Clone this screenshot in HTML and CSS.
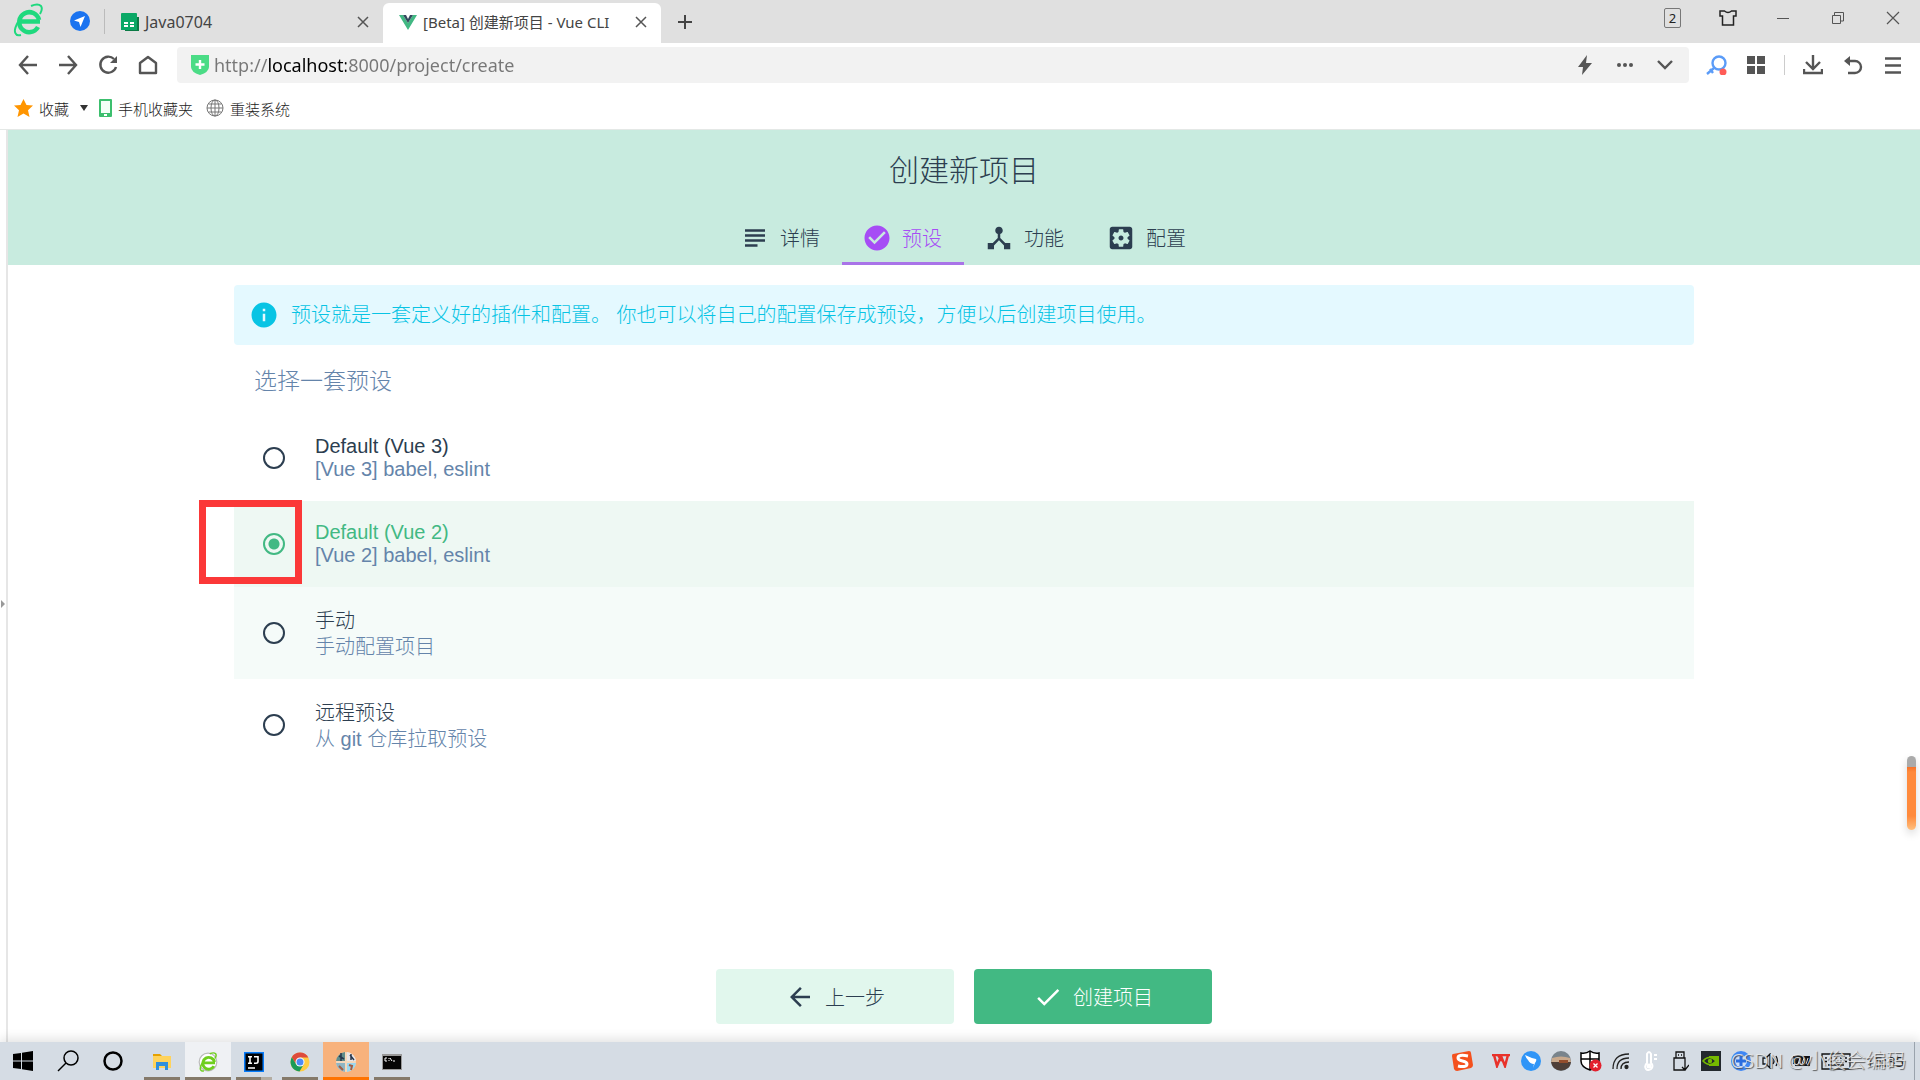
FILE: index.html
```html
<!DOCTYPE html>
<html lang="zh-CN">
<head>
    <meta charset="UTF-8">
    <meta name="viewport" content="width=device-width, initial-scale=1.0">
    <title>[Beta] 创建新项目 - Vue CLI</title>
    <link rel="stylesheet" href="styles.css">
</head>
<body>

<!-- Browser tabs -->
<header class="titlebar">
    <svg class="logo" viewBox="0 0 32 34"><path d="M5.500 18.500H28M26 24A10 10 0 1 1 27 17" fill="none" stroke="#1fd97e" stroke-width="4.500"/><path d="M6 19Q1 28 4 31Q5 33 9 32M19 3Q26 0 29 3Q31 6 28 11" fill="none" stroke="#1fd97e" stroke-width="2"/></svg>
    <svg class="compass" viewBox="0 0 20 20"><circle cx="10" cy="10" r="10" fill="#1a73f0"/><path d="M15 5L4 9.500L9 11L10.500 16Z" fill="#fff"/></svg>
    <span class="tab-divider"></span>
    <div class="tab">
        <svg width="18" height="18" viewBox="0 0 18 18"><path d="M15 4h3v14H4v-2z" fill="#0b7a45"/><path d="M0 1q0-1 1-1h14q1 0 1 1v16H0z" fill="#0aa866"/><path d="M3 9h4v2H3zM9 9h4v2H9zM3 12h4v2H3zM9 12h4v2H9z" fill="#fff"/></svg>
        <span class="tab-title">Java0704</span>
        <button class="tab-close" aria-label="关闭"><svg width="12" height="12" viewBox="0 0 12 12"><path d="M1 1l10 10M11 1L1 11"/></svg></button>
    </div>
    <div class="tab tab-active">
        <svg width="18" height="18" viewBox="0 0 18 18"><path d="M0 2h4l5 8 5-8h4L9 17z" fill="#42b883"/><path d="M4 2h3l2 4 2-4h3L9 10z" fill="#34495e"/></svg>
        <span class="tab-title">[Beta] 创建新项目 - Vue CLI</span>
        <button class="tab-close" aria-label="关闭"><svg width="12" height="12" viewBox="0 0 12 12"><path d="M1 1l10 10M11 1L1 11"/></svg></button>
    </div>
    <button class="tab-new" aria-label="新标签页"><svg width="16" height="16" viewBox="0 0 16 16"><path d="M8 1v14M1 8h14" stroke="#444" stroke-width="2"/></svg></button>
    <div class="window-buttons">
        <button aria-label="标签数"><span class="tab-count">2</span></button>
        <button aria-label="皮肤"><svg width="18" height="18" viewBox="0 0 18 18" fill="none" stroke="#222" stroke-width="1.500"><path d="M1 2h4.500q3.500 3 7 0H17v5h-2.500v9h-11V7H1z"/></svg></button>
        <button aria-label="最小化"><svg width="14" height="14" viewBox="0 0 14 14" stroke="#555"><path d="M1 7.500h12"/></svg></button>
        <button aria-label="还原"><svg width="14" height="14" viewBox="0 0 14 14" fill="none" stroke="#555"><path d="M1.500 4.500h8v8h-8zM3.500 4V1.500h9v8.500H10"/></svg></button>
        <button aria-label="关闭窗口"><svg width="14" height="14" viewBox="0 0 14 14" stroke="#555" stroke-width="1.200"><path d="M1 1l12 12M13 1L1 13"/></svg></button>
    </div>
</header>

<!-- Address bar -->
<div class="toolbar">
    <button aria-label="后退"><svg width="20" height="20" viewBox="0 0 20 20"><path d="M19 10H2M10 1L2 10l8 9"/></svg></button>
    <button aria-label="前进"><svg width="20" height="20" viewBox="0 0 20 20"><path d="M1 10h17M10 1l8 9-8 9"/></svg></button>
    <button aria-label="刷新"><svg width="20" height="20" viewBox="0 0 20 20"><path d="M16 4A8 8 0 1 0 18 12"/><path d="M19 1v7h-7z" fill="#555" stroke="none"/></svg></button>
    <button aria-label="主页"><svg width="20" height="20" viewBox="0 0 20 20"><path d="M2 8l8-6 8 6v10H2z" stroke-linejoin="round"/></svg></button>
    <div class="address">
        <svg width="18" height="20" viewBox="0 0 18 20"><path d="M0 0h18v12q0 5-9 8-9-3-9-8z" fill="#4bdc86" stroke="none"/><path d="M9 5v9M4.500 9.500h9" stroke="#fff"/></svg>
        <input class="url" type="text" value="http://localhost:8000/project/create" aria-label="地址">
        <button aria-label="极速模式"><svg width="16" height="20" viewBox="0 0 16 20"><path d="M10 0L1 12h5l-1 8 10-12H9z" fill="#555" stroke="none"/></svg></button>
        <button aria-label="更多"><svg width="18" height="6" viewBox="0 0 18 6"><g fill="#555" stroke="none"><circle cx="3" cy="3" r="2"/><circle cx="9" cy="3" r="2"/><circle cx="15" cy="3" r="2"/></g></svg></button>
        <button aria-label="展开"><svg width="16" height="10" viewBox="0 0 16 10"><path d="M1 1l7 7 7-7"/></svg></button>
    </div>
    <button aria-label="搜索"><svg width="22" height="20" viewBox="0 0 22 20"><g stroke="#5b9cf8"><circle cx="14" cy="8" r="6.500"/><path d="M9 13l-7 6M5 14l3 4"/></g><circle cx="18" cy="17" r="3.500" fill="#ff5c57" stroke="none"/></svg></button>
    <button aria-label="应用"><svg width="18" height="18" viewBox="0 0 18 18"><path d="M0 0h8v8H0zM10 0h8v8h-8zM0 10h8v8H0zM10 10h8v8h-8z" fill="#555" stroke="none"/></svg></button>
    <span class="tool-divider"></span>
    <button aria-label="下载"><svg width="20" height="20" viewBox="0 0 20 20"><path d="M10 0v13M3 7l7 7 7-7M1 14v4h18v-4"/></svg></button>
    <button aria-label="撤销"><svg width="20" height="20" viewBox="0 0 20 20"><path d="M3 6h9a6 6 0 0 1 0 12H5"/><path d="M1 6l6-5v10z" fill="#555" stroke="none"/></svg></button>
    <button aria-label="菜单"><svg width="16" height="18" viewBox="0 0 16 18"><path d="M0 2.500h16M0 9.500h16M0 16.500h16"/></svg></button>
</div>

<!-- Bookmarks -->
<nav class="bookmarks">
    <a href="#"><svg width="19" height="18" viewBox="0 0 19 18"><path d="M9.500 0l3 6 6.500.600-5 4.600 1.500 6.800-6-3.600L3.500 18 5 11.200 0 6.600 6.500 6z" fill="#ff9500"/></svg>收藏</a>
    <button class="fav-more" aria-label="更多收藏"><svg width="8" height="6" viewBox="0 0 8 6"><path d="M0 0h8L4 6z" fill="#333"/></svg></button>
    <a href="#"><svg width="13" height="18" viewBox="0 0 13 18"><rect width="13" height="18" rx="1" fill="#3cbf6e"/><path d="M2 2h9v12H2z" fill="#f3fff7"/><path d="M5 15h3v2H5z" fill="#fff"/></svg>手机收藏夹</a>
    <a href="#" class="bookmark-site"><svg width="18" height="18" viewBox="0 0 18 18" fill="none" stroke="#777"><circle cx="9" cy="9" r="8"/><ellipse cx="9" cy="9" rx="4" ry="8"/><path d="M9 1v16M1 9h16M2.500 5h13M2.500 13h13"/></svg>重装系统</a>
</nav>

<div class="viewport">
    <aside class="side-strip"><svg width="5" height="8" viewBox="0 0 5 8"><path d="M1 0l4 4-4 4z" fill="#999"/></svg></aside>

    <main class="project-create">
        <div class="page-header">
            <h1>创建新项目</h1>
            <nav class="steps">
                <a href="#"><svg viewBox="0 0 24 24"><path d="M4 5h16v2H4zM4 9h16v2H4zM4 13h16v2H4zM4 17h10v2H4z"/></svg>详情</a>
                <a href="#" class="active"><svg viewBox="0 0 24 24"><path d="M12 2C6.480 2 2 6.480 2 12s4.480 10 10 10 10-4.480 10-10S17.520 2 12 2zm-2 15l-5-5 1.410-1.410L10 14.170l7.590-7.590L19 8l-9 9z"/></svg>预设</a>
                <a href="#"><svg viewBox="0 0 24 24"><path d="M17 16l-4-4V8.820C14.160 8.400 15 7.300 15 6c0-1.660-1.340-3-3-3S9 4.340 9 6c0 1.300.840 2.400 2 2.820V12l-4 4H3v5h5v-3.050l4-4.200 4 4.200V21h5v-5h-4z"/></svg>功能</a>
                <a href="#"><svg viewBox="0 0 24 24"><path d="M12 10c-1.100 0-2 .900-2 2s.900 2 2 2 2-.900 2-2-.900-2-2-2zm7-7H5c-1.110 0-2 .900-2 2v14c0 1.100.890 2 2 2h14c1.110 0 2-.900 2-2V5c0-1.100-.890-2-2-2zm-1.750 9c0 .230-.020.460-.050.680l1.480 1.160c.130.110.170.300.080.450l-1.400 2.420c-.090.150-.270.210-.430.150l-1.740-.700c-.360.280-.760.510-1.180.690l-.260 1.850c-.030.170-.180.300-.350.300h-2.800c-.170 0-.320-.130-.350-.290l-.260-1.850c-.430-.180-.820-.410-1.180-.690l-1.740.700c-.160.060-.340 0-.430-.150l-1.400-2.420c-.090-.150-.050-.340.080-.450l1.480-1.160c-.030-.230-.050-.460-.050-.690s.020-.460.050-.680l-1.480-1.160c-.130-.110-.170-.300-.080-.450l1.400-2.420c.090-.150.270-.210.430-.150l1.740.700c.360-.280.760-.510 1.180-.690l.260-1.850c.030-.170.180-.300.350-.300h2.800c.170 0 .320.130.350.290l.260 1.850c.430.180.820.410 1.180.690l1.740-.700c.160-.060.340 0 .430.150l1.400 2.420c.090.150.050.340-.080.450l-1.480 1.160c.030.230.050.460.050.690z"/></svg>配置</a>
            </nav>
        </div>

        <form class="content" onsubmit="return false">
            <p class="info">
                <svg viewBox="0 0 24 24"><path d="M12 2C6.480 2 2 6.480 2 12s4.480 10 10 10 10-4.480 10-10S17.520 2 12 2zm1 15h-2v-6h2v6zm0-8h-2V7h2v2z"/></svg>
                预设就是一套定义好的插件和配置。 你也可以将自己的配置保存成预设，方便以后创建项目使用。
            </p>
            <h2>选择一套预设</h2>

            <label class="preset">
                <input type="radio" name="preset">
                <span class="preset-text"><span class="name">Default (Vue 3)</span><span class="description">[Vue 3] babel, eslint</span></span>
            </label>
            <label class="preset selected">
                <input type="radio" name="preset" checked>
                <span class="preset-text"><span class="name">Default (Vue 2)</span><span class="description">[Vue 2] babel, eslint</span></span>
                <span class="marker"></span>
            </label>
            <label class="preset tall hover">
                <input type="radio" name="preset">
                <span class="preset-text"><span class="name">手动</span><span class="description">手动配置项目</span></span>
            </label>
            <label class="preset tall">
                <input type="radio" name="preset">
                <span class="preset-text"><span class="name">远程预设</span><span class="description">从 git 仓库拉取预设</span></span>
            </label>

            <div class="actions">
                <button type="button" class="action"><svg viewBox="0 0 24 24"><path d="M20 11H7.830l5.590-5.590L12 4l-8 8 8 8 1.410-1.410L7.830 13H20v-2z"/></svg>上一步</button>
                <button type="submit" class="action primary"><svg viewBox="0 0 24 24"><path d="M9 16.200L4.800 12l-1.400 1.400L9 19 21 7l-1.400-1.400L9 16.200z"/></svg>创建项目</button>
            </div>
        </form>
        <div class="booster"></div>
    </main>
</div>

<!-- Windows taskbar -->
<footer class="taskbar">
    <div class="system">
        <button aria-label="开始"><svg width="20" height="20" viewBox="0 0 20 20"><path d="M0 3l8-1v7.500H0zM9 1.800L20 0v9.500H9zM0 10.500h8V18l-8-1zM9 10.500h11V20L9 18.200z"/></svg></button>
        <button aria-label="搜索"><svg width="22" height="22" viewBox="0 0 22 22" fill="none" stroke="#000" stroke-width="1.500"><circle cx="14" cy="8" r="7"/><path d="M9 13l-8 8"/></svg></button>
        <button aria-label="Cortana"><svg width="20" height="20" viewBox="0 0 20 20"><circle cx="10" cy="10" r="8.500" fill="none" stroke="#000" stroke-width="2.500"/></svg></button>
    </div>
    <button class="running" aria-label="资源管理器"><svg width="18" height="18" viewBox="0 0 18 18"><path d="M0 1h7l2 2v4H0z" fill="#e5a100"/><path d="M0 3h18v12H0z" fill="#ffd35c"/><path d="M3 17V9h12v8h-3v-4H6v4z" fill="#2f8fdd"/></svg></button>
    <button class="running current" aria-label="浏览器"><svg width="20" height="20" viewBox="0 0 32 34"><circle cx="16" cy="17" r="15" fill="#fff" stroke="#bbb" stroke-width="2"/><path d="M5.500 18.500H28M26 24A10 10 0 1 1 27 17" fill="none" stroke="#6fce1f" stroke-width="5"/><path d="M6 19Q1 28 4 31Q5 33 9 32M19 3Q26 0 29 3Q31 6 28 11" fill="none" stroke="#6fce1f" stroke-width="2.500"/></svg></button>
    <button class="running stacked" aria-label="IntelliJ IDEA"><svg width="20" height="20" viewBox="0 0 20 20"><path d="M0 0h20v20H0z" fill="#087cfa"/><path d="M1.500 1.500h17v17h-17z"/><path d="M4 4.800h4M6 4.800v6.400M4 11.200h4M10 4.800h4v4.700q0 1.700-2 1.700h-2M4 16h7" fill="none" stroke="#fff" stroke-width="1.600"/></svg></button>
    <button class="running" aria-label="Chrome"><svg width="20" height="20" viewBox="0 0 20 20"><circle cx="10" cy="10" r="9.500" fill="#ffcd40"/><path d="M1.800 5.200A9.500 9.500 0 0 1 18.300 5.500H10L6 12z" fill="#de4b3c"/><path d="M1.800 5.200A9.500 9.500 0 0 0 9.500 19.500L14 12 10 14 6 12z" fill="#1a9b58"/><circle cx="10" cy="10" r="4.500" fill="#fff"/><circle cx="10" cy="10" r="3.500" fill="#4c8bf5"/></svg></button>
    <button class="running alert" aria-label="消息"><svg width="20" height="20" viewBox="0 0 20 20"><circle cx="10" cy="10" r="10" fill="#f4d8bd"/><path d="M9 0A10 10 0 0 0 0 9h9z" fill="#5f8c8b"/><path d="M11 0a10 10 0 0 1 9 9h-9z" fill="#e9e6e8"/><path d="M0 11a10 10 0 0 0 9 9v-9z" fill="#8fb5c4"/><path d="M20 11a10 10 0 0 1-9 9v-9z" fill="#9bd8f0"/><path d="M3 4l5 3M5 1v8M14 3l4 5M15 2v6" stroke="#28364c" stroke-width="1.500"/><path d="M3 14l4 4M13 13l3 1-1 4" stroke="#a35d44" stroke-width="2" fill="none"/></svg></button>
    <button class="running" aria-label="命令提示符"><svg width="20" height="18" viewBox="0 0 20 18"><path d="M0 1h20v16H0z" fill="#999"/><path d="M1 3h18v13H1z" fill="#050505"/><path d="M5 5H3v3h2M7 5v1M7 7v1M8 5l2 3M11 8h2" stroke="#fff" fill="none"/></svg></button>

    <div class="tray">
        <button class="ime" aria-label="搜狗输入法"><svg width="22" height="20" viewBox="0 0 22 20"><path d="M1 3l16-3q2 0 2 2l2 12q0 2-2 3L5 20q-2 0-3-2L0 5q0-2 1-2z" fill="#f4511e"/><path d="M16 5Q6 3 6 7c0 4 9 2 9 6 0 3-5 3-9 2" fill="none" stroke="#fff" stroke-width="3"/></svg></button>
        <button aria-label="WPS"><svg width="18" height="14" viewBox="0 0 18 14"><path d="M0 1h18M2 1l3 11 4-10 4 10 3-11M6 1l4 6" fill="none" stroke="#e8322a" stroke-width="2.500"/></svg></button>
        <button aria-label="钉钉"><svg width="20" height="20" viewBox="0 0 20 20"><circle cx="10" cy="10" r="10" fill="#2f95f7"/><path d="M4 4q6 3 11 4 1 1-1 4l-2 5 1-4q-4 0-6-4Q5 7 4 4z" fill="#fff"/></svg></button>
        <button aria-label="头像"><svg width="20" height="20" viewBox="0 0 20 20"><circle cx="10" cy="10" r="10" fill="#79848c"/><path d="M1 7q9-3 18 0l1 4-20 1z" fill="#c9a98c"/><path d="M0 11h20q-1 5-3 6-7 5-14 0-2-2-3-6z" fill="#4f3f38"/><path d="M8 9h9v3H8z" fill="#944d2c"/></svg></button>
        <button aria-label="安全中心"><svg width="22" height="22" viewBox="0 0 22 22"><path d="M10 1q4 3 9 2v8q0 6-9 9-9-3-9-9V3q5 1 9-2z" fill="#fff" stroke="#000" stroke-width="1.500"/><path d="M10 1v19M1 9h18" stroke="#000" stroke-width="1.500"/><circle cx="15.500" cy="15.500" r="6" fill="#e3202d"/><path d="M13.500 13.500l4 4M17.500 13.500l-4 4" stroke="#fff" stroke-width="1.300"/></svg></button>
        <button aria-label="网络"><svg width="18" height="18" viewBox="0 0 18 18" fill="none" stroke="#222" stroke-width="1.300"><path d="M1 17Q1 2 17 2M5 17Q5 6 17 6M9 17Q9 10 17 10"/><circle cx="14.500" cy="15" r="1.500" fill="#222"/></svg></button>
        <button aria-label="温度"><svg width="14" height="20" viewBox="0 0 14 20" fill="none" stroke="#fff" stroke-width="2"><path d="M3 12V3q2-4 4 0v9q3 3 0 6-3 2-5 0-2-3 1-6zM10 4h3M10 8h3"/><circle cx="5" cy="15" r="1.500" fill="#fff"/></svg></button>
        <button aria-label="USB"><svg width="16" height="20" viewBox="0 0 16 20" fill="none" stroke="#111" stroke-width="1.300"><path d="M3 7V1h8v6M1 7h11v12H1zM9 16l3 3 4-5M5 4h1M8 4h1"/></svg></button>
        <button aria-label="NVIDIA"><svg width="20" height="20" viewBox="0 0 20 20"><path d="M0 0h20v20H0z" fill="#23282d"/><path d="M8 5h10v10H8z" fill="#76b900"/><path d="M2 10q6-7 13 0-6 7-13 0z" fill="#23282d" stroke="#76b900" stroke-width="1.500"/><circle cx="9" cy="10" r="2.200" fill="#76b900"/></svg></button>
        <button aria-label="电脑管家"><svg width="20" height="20" viewBox="0 0 20 20"><circle cx="10" cy="10" r="10" fill="#3f87f5"/><circle cx="10" cy="10" r="6" fill="#cfe0f7"/><path d="M10 5v10M5 10h10" stroke="#2b6de0" stroke-width="3"/></svg></button>
        <button aria-label="音量"><svg width="18" height="16" viewBox="0 0 18 16" fill="none" stroke="#111" stroke-width="1.300"><path d="M1 5h3l4-4v14l-4-4H1zM11 5q2 3 0 6M14 3q3 5 0 10"/></svg></button>
        <button aria-label="电池"><svg width="20" height="12" viewBox="0 0 20 12"><path d="M2 1h17v10H4V9H2z" fill="#111"/><path d="M0 4h3M7 9l2-6M11 9l2-6M15 9l2-6" stroke="#ddd"/></svg></button>
        <button class="keyboard" aria-label="触摸键盘"><svg width="30" height="17" viewBox="0 0 30 17" fill="none" stroke="#111" stroke-width="1.300"><path d="M1 1h28v15H1zM7 12h16"/><path d="M4 5h22M4 8.500h22" stroke-dasharray="2 3"/></svg></button>
        <time class="clock">15:35</time>
        <span class="watermark">CSDN @小俊会编码</span>
    </div>
</footer>

</body>
</html>
```
FILE: styles.css
```css
* {
    box-sizing: border-box;
}

body {
    margin: 0;
    min-height: 100vh;
    display: flex;
    flex-direction: column;
    background-color: #fff;
    color: #2c3e50;
    font-family: "Noto Sans", "Noto Sans CJK SC", sans-serif;
    overflow-x: hidden;
}

button {
    display: flex;
    align-items: center;
    justify-content: center;
    padding: 0;
    border: none;
    background: none;
    font: inherit;
    color: inherit;
    cursor: pointer;
}

a {
    color: inherit;
    text-decoration: none;
}

svg {
    flex: none;
}

/* Browser tabs */
.titlebar {
    display: flex;
    align-items: stretch;
    height: 43px;
    padding-left: 12px;
    background-color: #e0e0e0;
}

.logo {
    width: 32px;
    height: 34px;
    margin: 3px 26px 0 0;
}

.compass {
    width: 20px;
    height: 20px;
    margin: 11px 14px 0 0;
}

.tab-divider {
    width: 1px;
    height: 25px;
    margin-top: 9px;
    background-color: #bbb;
}

.tab {
    display: flex;
    align-items: center;
    width: 278px;
    padding: 0 14px 0 16px;
    gap: 6px;
    font-size: 16px;
    color: #444;
}

.tab-title {
    flex: 1;
    white-space: nowrap;
}

.tab-active {
    margin-top: 3px;
    padding-bottom: 3px;
    border-radius: 6px 6px 0 0;
    background-color: #fff;
    font-size: 15px;
}

.tab-close svg {
    stroke: #555;
    stroke-width: 1.5;
}

.tab-new {
    width: 48px;
}

.window-buttons {
    display: flex;
    margin-left: auto;
    padding-bottom: 7px;
}

.window-buttons button {
    width: 55px;
}

.tab-count {
    width: 17px;
    border: 1px solid #777;
    border-radius: 2px;
    font-size: 13px;
    line-height: 18px;
    color: #222;
}

/* Address bar */
.toolbar {
    display: flex;
    align-items: center;
    height: 44px;
    padding: 0 7px 0 8px;
}

.toolbar button {
    width: 40px;
    height: 36px;
}

.toolbar svg {
    fill: none;
    stroke: #555;
    stroke-width: 2.4;
}

.address {
    flex: 1;
    display: flex;
    align-items: center;
    height: 36px;
    margin: 0 7px 0 9px;
    padding: 0 4px 0 14px;
    border-radius: 4px;
    background-color: #f2f2f2;
}

.url {
    flex: 1;
    height: 36px;
    margin-left: 5px;
    padding: 0;
    border: none;
    outline: none;
    font: 18px "Noto Sans", sans-serif;
    /* the host part of the address is darker */
    color: transparent;
    background: linear-gradient(to right, #777 54px, #000 54px, #000 132px, #777 132px);
    -webkit-background-clip: text;
    background-clip: text;
}

.tool-divider {
    width: 1px;
    height: 20px;
    margin: 0 8px;
    background-color: #ccc;
}

/* Bookmarks */
.bookmarks {
    display: flex;
    align-items: center;
    height: 43px;
    padding-left: 14px;
    border-bottom: 1px solid #e4e8e6;
    font-size: 15px;
    font-weight: 300;
    color: #222;
}

.bookmarks a {
    display: flex;
    align-items: center;
    gap: 6px;
}

.fav-more {
    width: 30px;
    height: 30px;
}

.bookmark-site {
    margin-left: 13px;
}

/* Page */
.viewport {
    flex: 1;
    display: flex;
}

.side-strip {
    display: flex;
    align-items: center;
    width: 8px;
    padding-top: 36px;
    border-right: 2px solid #e6e6e6;
}

.project-create {
    flex: 1;
    display: flex;
    flex-direction: column;
    position: relative;
    font-family: "Liberation Sans", "Noto Sans CJK SC", sans-serif;
    font-weight: 300;
    font-size: 20px;
}

.page-header {
    display: flex;
    flex-direction: column;
    align-items: center;
    background-color: #c8ebdf;
}

.page-header h1 {
    margin: 0;
    padding: 21px 0 19px;
    font-size: 30px;
    line-height: 40px;
    font-weight: 300;
}

.steps {
    display: flex;
}

.steps a {
    display: flex;
    align-items: center;
    gap: 10px;
    width: 122px;
    height: 55px;
    padding: 3px 20px 0;
    border-bottom: 3px solid transparent;
}

.steps svg,
.info svg,
.action svg {
    width: 30px;
    height: 30px;
    fill: currentColor;
}

.steps .active {
    color: #a64df5;
    border-bottom-color: #a974e8;
}

.content {
    flex: 1;
    display: flex;
    flex-direction: column;
    width: 100%;
    max-width: 1460px;
    margin: 0 auto;
    padding: 20px 0 18px;
}

.info {
    display: flex;
    align-items: center;
    gap: 12px;
    margin: 0;
    padding: 15px;
    border-radius: 4px;
    background-color: #e4f9ff;
    color: #08c4e4;
    line-height: 30px;
}

.content h2 {
    margin: 0;
    padding: 20px 20px 18px;
    font-size: 23px;
    line-height: 32px;
    font-weight: 300;
    color: #6484aa;
}

.preset {
    display: flex;
    align-items: center;
    gap: 30px;
    position: relative;
    padding: 20px 29px;
    line-height: 23px;
    cursor: pointer;
}

.preset input {
    appearance: none;
    width: 22px;
    height: 22px;
    margin: 0;
    border: 2px solid #2c3e50;
    border-radius: 50%;
}

.preset input:checked {
    border-color: #42b983;
    background: radial-gradient(circle, #42b983 5px, transparent 6px);
}

.preset-text {
    display: flex;
    flex-direction: column;
}

.description {
    color: #6484aa;
}

.selected {
    background-color: #eef8f3;
}

.selected .name {
    color: #42b983;
}

.tall {
    padding: 19px 29px;
    line-height: 26px;
}

.tall .preset-text {
    padding-top: 2px;
}

.hover {
    background-color: #f5fbf9;
}

/* Red frame drawn round the chosen radio */
.marker {
    position: absolute;
    left: -35px;
    top: -1px;
    width: 103px;
    height: 84px;
    border: 7px solid #fb3838;
}

.actions {
    display: flex;
    justify-content: center;
    gap: 20px;
    margin-top: auto;
}

.action {
    gap: 10px;
    width: 238px;
    height: 55px;
    border-radius: 4px;
    background-color: #e1f7ed;
    font-weight: 300;
}

.primary {
    background-color: #42b983;
    color: #fff;
}

/* Floating memory meter of the browser */
.booster {
    position: absolute;
    right: 4px;
    bottom: 212px;
    width: 9px;
    height: 74px;
    border-radius: 5px;
    background: linear-gradient(#aaa 11px, #f5722a 11px, #ff8a3c 16px, #ff8a3c 60px, #ffc080);
    box-shadow: 0 4px 8px rgba(0, 0, 0, 0.15);
}

/* Taskbar */
.taskbar {
    display: flex;
    position: relative;
    height: 38px;
    background-color: #d5dce4;
    box-shadow: 0 -3px 12px rgba(0, 0, 0, 0.12);
}

.taskbar > button {
    width: 46px;
}

.system {
    display: flex;
    margin-right: 4px;
}

.system button {
    width: 45px;
}

.running {
    padding-top: 1px;
    background: linear-gradient(#857a6a, #857a6a) bottom / 36px 3px no-repeat;
}

.current {
    background: linear-gradient(#eff1f4 35px, #857a6a 35px);
}

.stacked {
    background: linear-gradient(to right, #857a6a 25px, #b3ada2 25px) bottom / 36px 3px no-repeat;
}

.alert {
    background: linear-gradient(#f8b27c 35px, #ff7300 35px);
}

.tray {
    display: flex;
    position: relative;
    margin-left: auto;
    margin-right: 5px;
    border-right: 1px solid #9aa3ad;
}

.tray button {
    width: 30px;
}

.tray .ime {
    margin-right: 8px;
}

.tray .keyboard {
    width: 40px;
}

.clock {
    width: 58px;
    font-size: 15px;
    line-height: 38px;
    text-align: center;
    color: #222;
}

.watermark {
    position: absolute;
    right: 8px;
    top: 0;
    font-size: 20px;
    line-height: 38px;
    font-weight: 300;
    white-space: nowrap;
    color: rgba(235, 235, 235, 0.9);
    text-shadow: 1px 1px 1px #555;
}
```
